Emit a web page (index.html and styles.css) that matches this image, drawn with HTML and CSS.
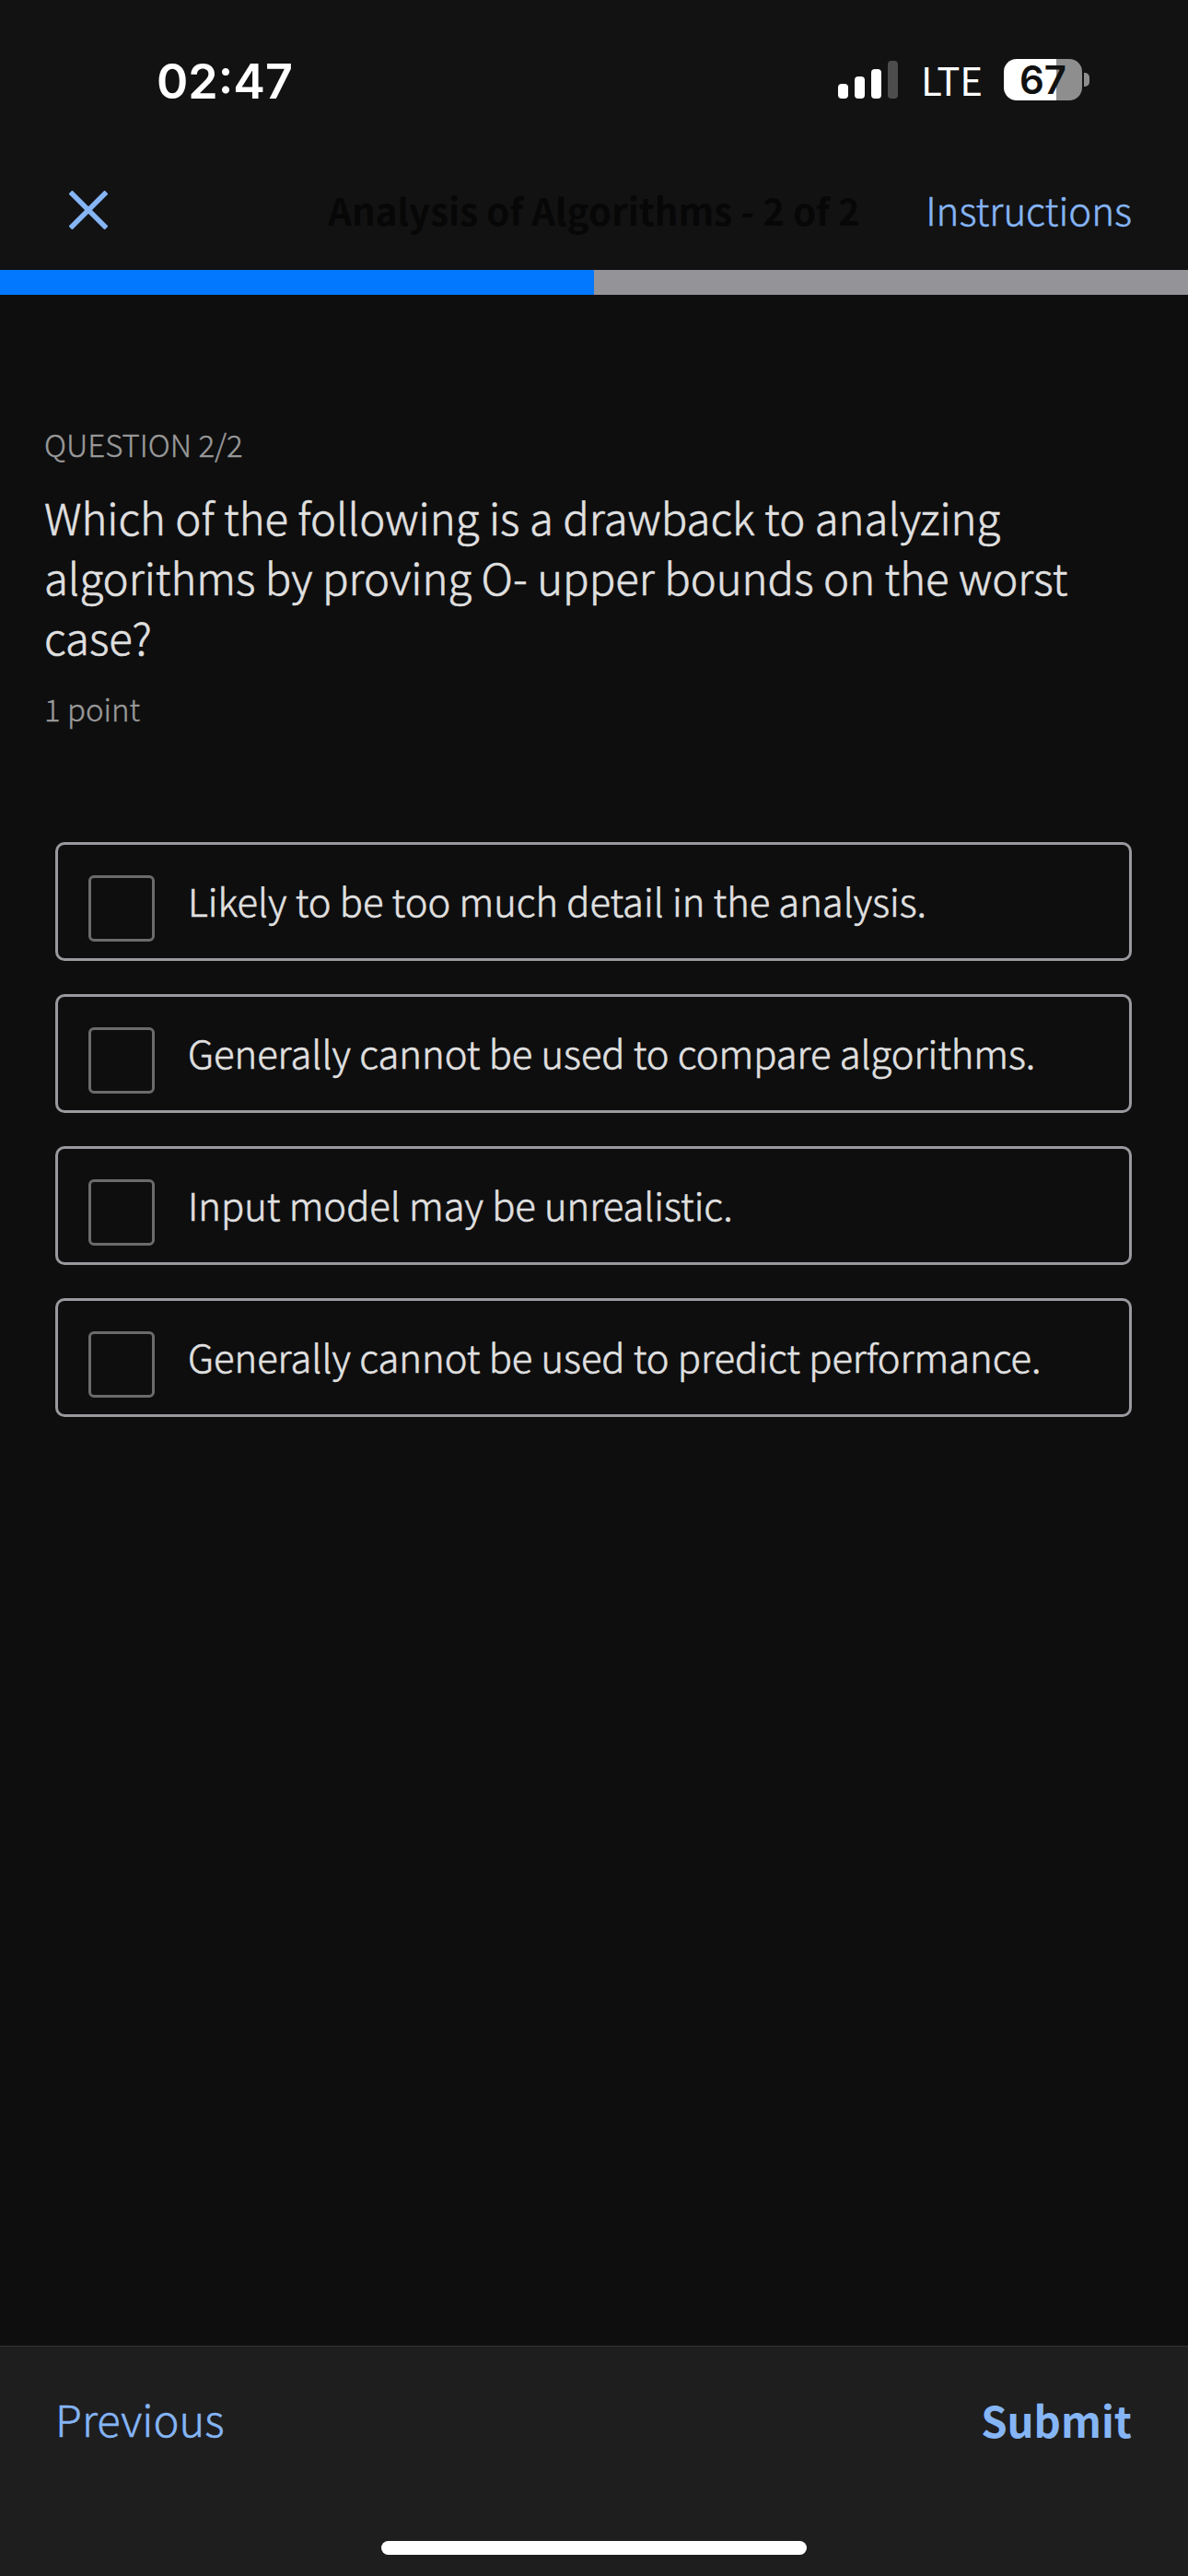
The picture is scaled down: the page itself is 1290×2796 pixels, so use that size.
FILE: index.html
```html
<!DOCTYPE html>
<html lang="en">
<head>
  <meta charset="UTF-8" />
  <meta name="viewport" content="width=device-width, initial-scale=1.0" />
  <title>Analysis of Algorithms - 2 of 2</title>
  <link rel="stylesheet" href="styles.css">
</head>
<body>
  <div class="status-bar">
    <span class="time">02:47</span>
    <div class="status-right">
      <div class="signal">
        <span class="bar bar-1"></span>
        <span class="bar bar-2"></span>
        <span class="bar bar-3"></span>
        <span class="bar bar-4"></span>
      </div>
      <span class="lte">LTE</span>
      <div class="battery">
        <div class="battery-body"><span class="battery-level">67</span></div>
        <span class="battery-nub"></span>
      </div>
    </div>
  </div>

  <header class="top-nav">
    <button class="close-btn" aria-label="Close">
      <svg width="42" height="42" viewBox="0 0 42 42"><path d="M1.5 1.5 40.5 40.5M40.5 1.5 1.5 40.5" fill="none" stroke="#85b5f5" stroke-width="5.5"/></svg>
    </button>
    <h1 class="quiz-title">Analysis of Algorithms - 2 of 2</h1>
    <a class="instructions">Instructions</a>
  </header>

  <div class="progress"><div class="progress-fill"></div></div>

  <main class="content">
    <p class="question-label">QUESTION 2/2</p>
    <h2 class="question-text">Which of the following is a drawback to analyzing algorithms by proving O- upper bounds on the worst case?</h2>
    <p class="points">1 point</p>

    <div class="options">
      <label class="option"><span class="checkbox"></span><span class="option-text">Likely to be too much detail in the analysis.</span></label>
      <label class="option"><span class="checkbox"></span><span class="option-text">Generally cannot be used to compare algorithms.</span></label>
      <label class="option"><span class="checkbox"></span><span class="option-text">Input model may be unrealistic.</span></label>
      <label class="option"><span class="checkbox"></span><span class="option-text">Generally cannot be used to predict performance.</span></label>
    </div>
  </main>

  <footer class="bottom-bar">
    <div class="bottom-actions">
      <a class="previous">Previous</a>
      <a class="submit">Submit</a>
    </div>
    <div class="home-indicator"></div>
  </footer>
</body>
</html>
```

FILE: styles.css
```css
* {
  box-sizing: border-box;
}
html, body {
  margin: 0;
  height: 2796px;
}
body {
  width: 1290px;
  display: flex;
  flex-direction: column;
  overflow: hidden;
  background: #0e0e0f;
  color: #e0e0e0;
  font-family: "Noto Sans CJK SC", "Noto Sans CJK JP", "Open Sans", sans-serif;
  font-weight: 300;
}
.status-bar {
  height: 173px;
  flex: none;
  display: flex;
  justify-content: space-between;
  padding: 60px 107px 0 170px;
  background: #121213;
}
.time {
  margin-top: 1px;
  font-family: Inter, sans-serif;
  font-size: 52px;
  font-weight: 600;
  line-height: 56px;
  color: #fff;
}
.status-right {
  display: flex;
  align-items: flex-start;
  height: 49px;
  margin-top: 4px;
}
.signal {
  display: flex;
  align-items: flex-end;
  gap: 7px;
  height: 41px;
  margin-top: 2px;
}
.bar {
  width: 11px;
  border-radius: 4px;
  background: #fff;
}
.bar-1 { height: 16px; }
.bar-2 { height: 24px; }
.bar-3 { height: 32px; }
.bar-4 { height: 41px; background: #4d4d4d; }
.lte {
  width: 90px;
  margin: -3px 0 0 25px;
  font-size: 42px;
  font-weight: 400;
  line-height: 49px;
  color: #fff;
}
.battery {
  display: flex;
  align-items: center;
  height: 45px;
}
.battery-body {
  width: 85px;
  height: 45px;
  border-radius: 14px;
  display: flex;
  align-items: center;
  justify-content: center;
  background: linear-gradient(to right, #fff 67%, #8e8e8e 67%);
}
.battery-level {
  font-family: Inter, sans-serif;
  font-size: 42px;
  font-weight: 600;
  line-height: 45px;
  color: #111;
}
.battery-nub {
  width: 6px;
  height: 15px;
  margin-left: 2px;
  border-radius: 0 5px 5px 0;
  background: #8e8e8e;
}
.top-nav {
  height: 120px;
  flex: none;
  display: grid;
  grid-template-columns: 1fr auto 1fr;
  align-items: center;
  padding: 0 61px;
  background: #121213;
}
.close-btn {
  justify-self: start;
  display: block;
  width: 42px;
  height: 42px;
  padding: 0;
  margin: -10px 0 0 14px;
  border: none;
  background: none;
}
.close-btn svg {
  display: block;
}
.quiz-title {
  margin: -10px 0 0;
  font-size: 40.2px;
  font-weight: 700;
  line-height: 60px;
  color: #070707;
}
.instructions {
  justify-self: end;
  margin-top: -12px;
  font-size: 42px;
  line-height: 60px;
  -webkit-text-stroke: 0.5px;
  color: #85b5f5;
}
.progress {
  height: 27px;
  flex: none;
  background: #939398;
}
.progress-fill {
  width: 50%;
  height: 100%;
  background: #0278ff;
}
.content {
  flex: 1;
  padding: 139px 61px 0 48px;
}
.question-label {
  margin: 0;
  font-size: 33px;
  line-height: 46px;
  -webkit-text-stroke: 0.4px;
  color: #9a9a9a;
}
.question-text {
  margin: 23px 0 0;
  font-size: 47.3px;
  font-weight: 300;
  line-height: 65px;
  -webkit-text-stroke: 0.6px;
  color: #e0e0e0;
}
.points {
  margin: 23px 0 0;
  font-size: 33px;
  line-height: 46px;
  -webkit-text-stroke: 0.4px;
  color: #9a9a9a;
}
.options {
  display: flex;
  flex-direction: column;
  gap: 36px;
  margin: 122px 0 0 12px;
}
.option {
  height: 129px;
  display: flex;
  align-items: center;
  padding-left: 33px;
  border: 3px solid #9a9a9e;
  border-radius: 10px;
}
.checkbox {
  width: 72px;
  height: 72px;
  flex: none;
  margin-top: 15px;
  border: 3px solid #6b6b6b;
  border-radius: 6px;
}
.option-text {
  margin: -3px 0 0 36px;
  font-size: 41.7px;
  line-height: 60px;
  -webkit-text-stroke: 0.6px;
  color: #e0e0e0;
}
.bottom-bar {
  height: 250px;
  flex: none;
  display: flex;
  flex-direction: column;
  background: #1e1e1e;
  border-top: 1px solid #333;
}
.bottom-actions {
  display: flex;
  justify-content: space-between;
  padding: 43px 61px 0;
  font-size: 47.2px;
  line-height: 70px;
  color: #85b5f5;
}
.previous {
  margin-left: -1px;
  -webkit-text-stroke: 0.5px;
}
.submit {
  margin-top: 1px;
  font-size: 45.6px;
  font-weight: 700;
}
.home-indicator {
  width: 462px;
  height: 15px;
  margin: 97px auto 0;
  border-radius: 8px;
  background: #fff;
}
```
